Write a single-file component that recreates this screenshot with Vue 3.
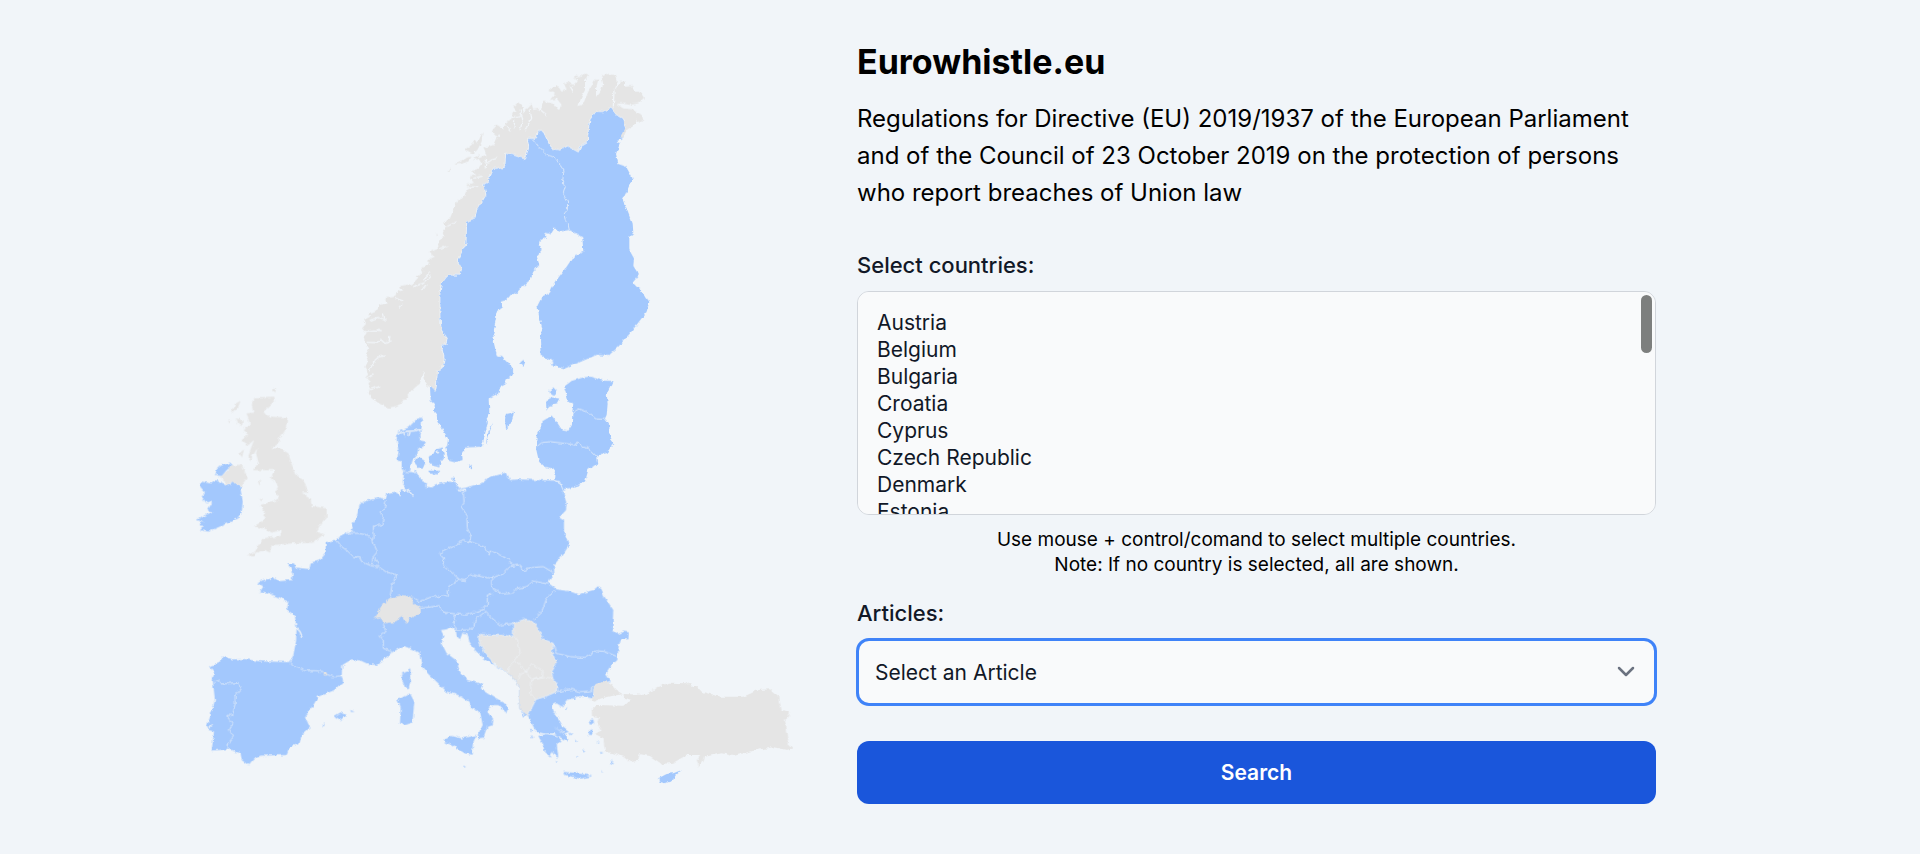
<template>
  <main id="home">
    <svg class="map" viewBox="576 180 1851 2202" role="img" aria-label="Map of Europe">
      <defs>
        <filter id="coast" x="0" y="0" width="100%" height="100%" color-interpolation-filters="sRGB">
          <feTurbulence type="fractalNoise" baseFrequency="0.07" numOctaves="3" seed="4" result="noise" />
          <feDisplacementMap in="SourceGraphic" in2="noise" scale="12" xChannelSelector="R" yChannelSelector="G" />
        </filter>
      </defs>
      <g filter="url(#coast)">
        <g v-for="region in regions" :key="region.name" :transform="region.origin">
          <path v-for="d in region.eu" :key="d" class="eu" :d="d" />
          <path v-for="d in region.other" :key="d" class="other" :d="d" />
          <path v-for="d in region.water" :key="d" class="water" :d="d" />
          <path v-for="d in region.borders" :key="d" class="border" :d="d" />
        </g>
      </g>
    </svg>

    <form class="search-form" @submit.prevent>
      <h1>Eurowhistle.eu</h1>
      <p class="intro">
        Regulations for Directive (EU) 2019/1937 of the European Parliament and of the Council of 23 October 2019 on the protection of persons who report breaches of Union law
      </p>

      <label for="countries">Select countries:</label>
      <div class="list-wrapper">
        <select id="countries" class="country-list" v-model="selected" multiple @scroll="onScroll">
          <option v-for="country in countries" :key="country" :value="country">{{ country }}</option>
        </select>
        <span class="thumb" :style="{ top: thumbTop + 'px' }"></span>
      </div>
      <p class="hint">
        Use mouse + control/comand to select multiple countries.<br />
        Note: If no country is selected, all are shown.
      </p>

      <label for="articles">Articles:</label>
      <div class="article-wrapper">
        <select id="articles" class="article-select" v-model="article">
          <option value="">Select an Article</option>
          <option v-for="n in 29" :key="n" :value="n">Article {{ n }}</option>
        </select>
        <svg class="chevron" viewBox="0 0 18 12" aria-hidden="true">
          <path d="M2 2l7 7 7-7" />
        </svg>
      </div>

      <button type="submit">Search</button>
    </form>
  </main>
</template>

<script setup>
import { ref } from 'vue';

const selected = ref([]);
const article = ref('');
const thumbTop = ref(4);

const countries = [
  'Austria', 'Belgium', 'Bulgaria', 'Croatia', 'Cyprus', 'Czech Republic', 'Denmark',
  'Estonia', 'Finland', 'France', 'Germany', 'Greece', 'Hungary', 'Ireland', 'Italy',
  'Latvia', 'Lithuania', 'Luxembourg', 'Malta', 'Netherlands', 'Poland', 'Portugal',
  'Romania', 'Slovakia', 'Slovenia', 'Spain', 'Sweden'
];

function onScroll(e) {
  const el = e.target;
  const range = el.scrollHeight - el.clientHeight;
  thumbTop.value = 4 + (el.scrollTop / range) * (el.clientHeight - 66);
}

const regions = [
  {
    name: 'continent',
    origin: 'translate(540 1110)',
    eu: [
      'M232 637L250 630 285 623 300 633 335 630 338 612 325 580 342 580 347 593 388 597 392 578 420 570 437 550 437 518 468 508 500 490 518 475 515 460 530 440 540 402 560 392 600 383 614 388 618 372 650 368 662 380 662 362 680 358 675 350 668 340 672 310 665 300 665 275 652 270 655 245 650 205 655 185 685 173 710 147 726 142 725 170 718 200 722 212 738 215 730 230 715 235 712 255 698 270 692 290 690 305 715 312 720 330 742 340 735 350 755 352 780 340 810 335 825 340 840 355 858 353 910 337 925 322 980 307 990 330 1015 328 1125 332 1147 342 1150 370 1160 400 1158 420 1138 443 1152 452 1152 485 1167 525 1155 545 1122 585 1123 610 1103 638 1130 658 1175 665 1197 673 1240 660 1255 648 1265 655 1270 675 1300 720 1297 780 1315 792 1330 785 1347 787 1345 808 1322 808 1315 835 1312 870 1295 885 1278 912 1292 933 1245 942 1240 965 1237 985 1200 978 1160 990 1145 1010 1130 1000 1118 1005 1120 1025 1135 1045 1148 1068 1168 1085 1155 1090 1120 1070 1160 1097 1165 1115 1140 1102 1120 1090 1090 1090 1068 1085 1055 1060 1043 1035 1037 1040 1018 1015 1018 950 1010 935 985 910 950 890 920 870 900 855 885 840 868 815 862 790 848 788 840 808 830 798 828 782 812 770 800 778 783 780 790 795 785 820 800 850 828 870 840 905 862 930 908 942 902 955 940 980 975 1000 983 1015 978 1028 955 1005 935 1005 922 1025 940 1050 938 1065 922 1070 910 1103 895 1105 898 1085 908 1065 900 1025 875 1015 865 995 835 975 800 965 775 940 745 912 725 890 718 848 685 832 670 828 640 845 600 877 590 885 560 880 542 872 515 868 487 885 485 915 490 940 460 962 415 980 400 1005 375 1040 390 1073 365 1095 358 1122 330 1130 320 1155 245 1157 220 1168 205 1185 185 1170 182 1150 145 1137 95 1142 102 1085 87 1080 80 1070 92 1035 105 990 98 930 102 905 87 890 120 875 128 860 155 868 195 867 240 874 330 876 340 855 348 815 350 775 345 740 320 720 325 695 290 680 262 668 240 665 250 650Z',
      'M65 335L95 340 110 330 130 340 150 345 157 332 180 348 188 395 185 430 175 445 130 465 85 485 60 480 72 468 55 465 70 455 50 450 75 435 100 425 82 422 98 395 80 400 65 380 75 370 60 352Z',
      'M105 315L115 290 150 278 158 285 140 300 125 318Z'
    ],
    other: [
      'M225 85L282 83 285 92 250 125 262 140 325 142 320 175 295 210 298 218 275 235 300 235 325 250 345 312 370 330 385 368 368 368 392 385 395 408 440 415 440 440 420 465 410 485 432 492 400 518 340 520 275 525 270 548 255 540 228 548 218 560 203 555 225 545 250 505 300 498 305 480 275 488 260 478 222 468 252 452 255 428 240 405 285 392 295 385 288 365 295 345 272 325 285 300 240 300 222 300 235 275 228 250 232 235 210 270 205 255 222 210 205 225 185 210 205 195 188 180 210 165 200 130 220 128 215 105Z',
      'M120 322L145 300 150 287 185 284 203 325 185 348 155 335 145 345Z',
      'M155 120L165 102 182 92 175 110 160 128ZM170 145L188 152 186 168 174 160ZM178 250L192 238 186 262ZM234 340L244 330 238 346ZM238 388L248 386 246 394ZM278 60L288 52 286 68ZM145 150L150 148 147 160Z',
      'M578 750L590 735 610 700 628 685 665 675 695 680 700 700 722 715 722 730 705 742 690 740 680 762 665 740 645 757 610 760 600 742 585 745Z'
    ],
    water: ['M652 192L680 184 708 182 722 178', 'M670 362L688 362 700 376', 'M498 484L522 482', 'M672 190L676 200M690 186L686 198'],
    borders: [
      'M630 683L635 650 650 615 620 607 595 590 575 588 545 575 540 560 520 560 505 545 485 530 468 508',
      'M500 490L535 490 560 495 575 508 578 520',
      'M618 392L612 420 602 430 612 445 608 465 580 468 582 500 578 515 592 545 580 560 575 585M585 562L595 585',
      'M665 303L692 306'
    ]
  },
  {
    name: 'scandinavia',
    origin: 'translate(1020 150)',
    eu: [
      'M290 1000L287 1022 270 1012 272 1050 285 1062 282 1085 290 1095 292 1115 304 1130 315 1150 324 1165 322 1185 316 1195 326 1232 345 1237 368 1230 366 1208 380 1192 425 1190 432 1165 438 1140 444 1120 440 1105 448 1085 446 1048 455 1040 475 1030 480 1012 500 1000 495 990 515 975 520 962 505 940 490 925 470 915 462 880 460 850 466 815 472 785 490 770 482 755 500 750 512 735 530 728 545 712 570 690 580 665 598 645 590 618 605 600 597 575 620 560 612 548 630 552 640 535 660 545 688 540 704 548 727 562 730 605 700 620 680 650 650 690 635 715 630 728 605 742 592 768 598 800 607 835 600 870 602 915 620 925 640 935 655 950 675 955 700 945 730 932 770 915 805 918 835 890 870 850 920 785 928 755 910 730 878 698 897 675 880 648 882 625 868 600 868 560 880 548 878 520 862 480 848 450 878 385 858 350 835 342 828 312 840 280 832 276 850 262 856 232 852 208 830 195 812 172 790 185 768 184 750 208 745 240 742 275 725 285 715 306 682 288 660 300 634 295 610 245 595 243 590 263 562 266 566 290 556 327 520 315 497 310 495 345 487 360 468 350 450 370 445 395 431 403 438 435 410 480 405 503 380 515 378 580 352 632 365 655 360 675 325 675 305 700 300 725 300 800 304 840 322 865 318 882 304 888 313 925 308 952 292 963Z'
    ],
    other: [
      'M287 1022L262 1006 254 985 250 962 243 985 240 1000 222 1015 205 1035 185 1060 165 1070 148 1074 130 1068 110 1055 95 1045 86 1030 90 1015 82 1000 90 992 76 985 84 970 76 950 86 930 78 912 88 895 76 880 70 860 80 850 66 835 78 822 72 810 90 800 88 790 112 780 118 765 140 760 136 745 165 740 172 720 190 725 180 708 205 704 222 700 235 685 230 680 250 665 245 655 270 640 258 630 285 620 265 608 290 598 300 580 298 570 312 560 308 548 320 530 312 518 330 505 340 480 350 455 372 440 380 420 395 415 378 405 405 398 388 380 410 375 392 365 415 355 425 340 415 325 440 315 430 295 460 285 470 260 455 245 470 225 490 235 500 215 520 205 512 190 530 185 520 170 535 157 548 170 550 190 560 175 575 160 580 180 600 175 610 155 640 160 655 180 665 165 650 145 630 150 645 130 625 122 650 105 665 125 680 120 672 100 690 95 700 110 712 90 702 85 720 80 735 68 748 78 735 90 735 120 725 140 715 168 728 165 745 125 765 90 775 88 768 115 768 140 780 125 790 105 785 80 800 72 825 75 830 90 825 120 840 95 855 95 855 110 880 108 885 125 900 125 912 143 895 160 870 165 845 160 830 162 850 175 880 178 905 195 910 210 900 218 885 208 885 225 860 240 850 262 840 262 856 232 852 208 830 195 812 172 790 185 768 184 750 208 745 240 742 275 725 285 715 306 682 288 660 300 634 295 610 245 595 243 590 263 562 266 566 290 556 327 520 315 497 310 495 345 487 360 468 350 450 370 445 395 431 403 438 435 410 480 405 503 380 515 378 580 352 632 365 655 360 675 325 675 305 700 300 725 300 800 304 840 322 865 318 882 304 888 313 925 308 952 292 963 290 1000Z',
      'M375 298L395 285 405 270 412 280 428 246 425 275 412 300 398 312 388 305ZM345 345L362 335 382 322 395 320 385 334 362 342ZM322 366L332 352 330 364ZM400 325L420 312 412 330ZM628 122L640 116 636 128ZM705 78L716 76 708 84ZM290 550L294 556 290 558Z'
    ],
    water: [
      'M80 877L110 878 122 868 135 880 155 872M150 858L146 880M88 960L105 930 118 920 135 918M80 985L104 972M88 1020L118 1010M75 845L100 840 125 842M88 812L115 802 140 810M130 790L134 805M165 745L190 752M178 775L186 765M220 710L250 700 275 678M240 720L262 705M320 530L350 515M385 410L415 412M400 385L425 378M430 340L470 325M435 355L440 325',
      'M505 205L545 195M540 240L548 205 540 178M522 235L524 210M555 240L575 205 570 175M590 170L620 195M490 215L510 240M820 172L822 120M700 125L690 108M450 270L480 255M300 595L325 588M270 665L250 690'
    ],
    borders: [
      'M578 266L600 295 620 315 645 322 660 345 672 362 667 400 676 410 670 430 683 455 682 480 673 490 675 510 684 522 688 540',
      'M287 1022L290 1000 292 963 308 952 313 925 304 888 318 882 322 865 304 840 300 800 300 725 305 700 325 675 360 675 365 655 352 632 378 580 380 515 405 503 410 480 438 435 431 403 445 395 450 370 468 350 487 360 495 345 497 310 520 315 556 327 566 290 562 266 590 263 595 243 610 245 634 295 660 300 682 288 715 306 725 285 742 275 745 240 750 208 768 184 790 185 812 172 830 195 852 208 856 232'
    ]
  },
  {
    name: 'baltic',
    origin: 'translate(1020 810)',
    eu: [
      'M672 350L695 333 730 322 750 320 790 332 818 333 800 370 803 400 800 435 795 445 808 465 808 490 820 522 800 548 768 558 772 580 745 600 735 635 700 652 668 658 665 640 642 630 645 600 615 590 597 575 588 535 590 495 603 470 605 455 635 437 650 455 665 478 685 482 696 465 697 425 700 400 685 395 680 375Z',
      'M618 395L640 382 658 385 650 400 625 410 620 422ZM624 365L640 352 652 365 640 377Z',
      'M497 433L522 425 518 445 510 465 498 478 495 450ZM460 458L448 492 438 528 442 490ZM383 582L397 590 392 597ZM540 278L550 270 558 280 550 290ZM632 285L645 272 648 288Z',
      'M222 572L240 562 257 575 250 592 232 594ZM266 560L280 552 286 540 308 532 312 562 302 575 298 592 282 588 268 575ZM265 602L298 602 290 613 268 610ZM332 625L345 622 342 636ZM222 600L232 608 226 612Z'
    ],
    other: [],
    water: ['M288 548L298 546'],
    borders: [
      'M697 427L720 417 740 425 768 447 800 448',
      'M590 530L605 518 630 515 690 522 705 525 712 515 725 530 745 535 768 557',
      'M642 630L660 636 668 658'
    ]
  },
  {
    name: 'central',
    origin: 'translate(1200 1350)',
    eu: [],
    other: [],
    water: ['M172 118L198 122'],
    borders: [
      'M190 125L192 155 185 172 200 195 202 235 212 255 210 275',
      'M210 275L190 272 155 292 118 310 130 325 130 345 178 388 195 392 212 373 245 380 275 385 310 370 330 350 340 348 325 328 300 315 270 300 268 315 255 292 225 280Z',
      'M340 348L358 345 370 362 400 352 430 350 460 368M275 385L275 405 282 420 310 432 335 430 350 415 380 410 400 393 443 402',
      'M178 388L145 410 145 442 130 437 90 442 60 455 40 442M62 475L118 467 125 485 165 492 200 495 250 478 262 465 262 435 280 430',
      'M250 478L265 495 300 525 340 520M465 422L440 445 425 485 400 508',
      'M165 492L162 520 170 540 205 540 222 530 225 510 255 485'
    ]
  },
  {
    name: 'iberia',
    origin: 'translate(570 1800)',
    eu: ['M433 348L452 337 467 345 452 360ZM480 330L494 335 484 336ZM396 377L404 370 402 379Z'],
    other: ['M400 218L410 217 412 226 402 227Z'],
    water: ['M318 82L330 95 337 112', 'M56 384L68 374'],
    borders: [
      'M302 188L315 200 345 212 375 212 400 215M412 224L430 230 457 228',
      'M72 245L88 240 95 252 145 248 155 265 135 288 135 315 128 345 110 347 128 372 118 390 130 410 115 430 113 447',
      'M580 72L588 95 570 108 580 120 580 145 605 155 600 165'
    ]
  },
  {
    name: 'balkans',
    origin: 'translate(1140 1800)',
    eu: [
      'M192 420L215 408 245 415 290 405 278 435 278 465 255 460 215 435 195 428Z',
      'M52 300L90 280 103 305 97 368 70 377 60 370 62 320ZM66 220L86 213 90 203 94 235 85 268 75 262 66 240Z',
      'M475 408L500 402 530 408 545 425 530 432 535 472 525 468 515 455 512 472 495 462 488 432Z',
      'M550 516L580 518 618 524 637 529 600 536 552 524ZM686 498L700 480 697 492ZM250 497L258 500 252 503Z',
      'M625 362L640 358 642 372 630 374ZM626 392L634 390 634 405 627 405ZM555 322L562 326 557 330ZM580 292L588 294 582 300ZM568 398L578 402 572 406ZM585 418L594 424 588 426ZM608 450L616 452 610 458ZM590 468L596 470 590 474ZM650 424L660 426 652 428ZM660 456L670 458 662 462ZM666 510L669 516 665 518ZM425 340L434 348 430 354ZM450 385L460 395 452 396ZM452 404L460 412 456 416ZM528 482L533 486 529 489Z',
      'M310 190L355 205M318 198L345 205'
    ],
    other: [
      'M298 103L330 105 400 108 400 68 430 58 458 65 480 95 485 115 520 130 515 155 530 190 515 215 518 235 530 250 530 275 495 290 468 298 452 330 443 348 418 325 418 260 410 245 385 220 348 195 315 160 300 130 296 115Z'
    ],
    water: ['M340 188L350 200'],
    borders: [
      'M400 108L412 118 420 155 405 180 388 200 385 220M405 182L432 205 440 215 455 190 490 215 488 230 455 240 452 280 465 298M412 240L420 222 440 215 452 240M455 240L500 232 518 235',
      'M298 103L330 105 400 108 400 68 430 58 458 65 480 95 485 115 520 130 515 155 530 190 515 215 518 235 530 250 530 275 495 290 468 298 452 330 443 348',
      'M385 220L348 195 315 160 300 130 296 115 298 103',
      'M520 132L528 160 570 170 615 172 650 152 675 155 712 170',
      'M530 275L575 268 600 275 635 272 635 262 645 255'
    ]
  },
  {
    name: 'turkey',
    origin: 'translate(1710 1980)',
    eu: ['M265 355L290 342 310 340 335 330 315 348 308 362 285 370 268 365Z'],
    other: [
      'M78 68L100 63 120 68 135 88 158 103 130 107 95 115 70 125 62 120 72 108 70 85Z',
      'M65 150L80 135 160 137 185 120 160 113 162 102 230 105 260 82 300 68 345 70 352 65 365 78 380 78 395 95 450 110 520 110 565 90 600 88 628 110 630 130 635 150 660 157 655 172 645 180 655 235 652 250 668 265 650 270 610 262 560 270 490 288 455 280 405 290 400 305 388 320 380 300 390 285 350 285 310 308 275 312 240 288 208 283 205 302 180 307 160 290 130 280 105 275 100 235 75 222 92 212 82 185 90 172 66 168Z'
    ],
    water: [],
    borders: []
  }
];
</script>

<style>
body {
  margin: 0;
  background-color: #f1f5f9;
}
</style>

<style scoped>
#home {
  display: grid;
  grid-template-columns: minmax(0, 617fr) minmax(0, 799fr);
  gap: 48px;
  align-items: start;
  padding: 40px 13.75% 32px 10%;
  font-family: Inter, "Liberation Sans", sans-serif;
  color: #000;
}
.map {
  display: block;
  width: 100%;
  margin-top: 20px;
}
.eu {
  fill: #a3c8fd;
}
.other {
  fill: #e5e5e5;
}
.water {
  fill: none;
  stroke: #f1f5f9;
  stroke-width: 4;
}
.border {
  fill: none;
  stroke: #f1f5f9;
  stroke-opacity: 0.7;
  stroke-width: 3;
  stroke-linejoin: round;
}
.search-form {
  display: flex;
  flex-direction: column;
}
h1 {
  margin: 0 0 16px;
  font-size: 34px;
  line-height: 44px;
  font-weight: 700;
}
.intro {
  margin: 0 0 40px;
  font-size: 24px;
  line-height: 37px;
}
label {
  margin-bottom: 12px;
  font-size: 22px;
  line-height: 28px;
  font-weight: 500;
  color: #111827;
}
.list-wrapper {
  position: relative;
  display: flex;
}
select {
  box-sizing: border-box;
  width: 100%;
  font-family: inherit;
  font-size: 21px;
  color: #111827;
  background-color: #f9fafb;
  border-radius: 12px;
  outline: none;
  appearance: none;
}
.country-list {
  height: 224px;
  padding: 18px 18px 0;
  border: 1px solid #d1d5db;
  scrollbar-width: none;
}
.country-list option {
  min-height: 27px;
  padding: 0 1px;
  line-height: 27px;
}
.thumb {
  position: absolute;
  right: 4px;
  width: 11px;
  height: 58px;
  border-radius: 6px;
  background-color: #7d7f7e;
  pointer-events: none;
}
.hint {
  margin: 12px 0 22px;
  font-size: 19px;
  line-height: 25px;
  text-align: center;
}
.article-wrapper {
  position: relative;
  display: flex;
  margin-bottom: 36px;
}
.article-select {
  height: 66px;
  padding: 0 48px 0 16px;
  border: 2px solid #3f83f8;
  box-shadow: 0 0 0 1px #3f83f8;
}
.chevron {
  position: absolute;
  top: 27px;
  right: 21px;
  width: 18px;
  height: 12px;
  pointer-events: none;
}
.chevron path {
  fill: none;
  stroke: #6b7280;
  stroke-width: 2.5;
  stroke-linecap: round;
  stroke-linejoin: round;
}
button {
  height: 63px;
  border: none;
  border-radius: 12px;
  background-color: #1a56db;
  color: #fff;
  font-family: inherit;
  font-size: 21px;
  font-weight: 600;
  cursor: pointer;
}
@media (max-width: 900px) {
  #home {
    grid-template-columns: minmax(0, 1fr);
    padding: 24px;
  }
}
</style>
